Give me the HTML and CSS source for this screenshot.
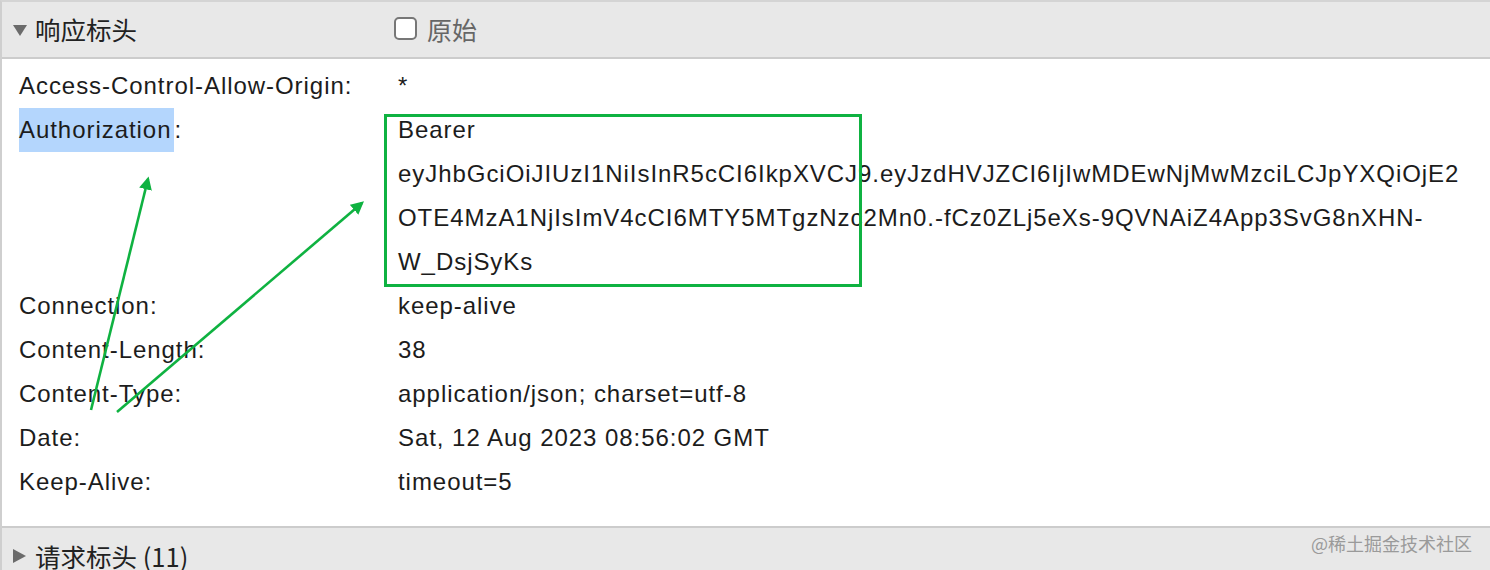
FILE: index.html
```html
<!DOCTYPE html>
<html lang="zh">
<head>
<meta charset="utf-8">
<title>响应标头</title>
<link rel="stylesheet" href="styles.css">
</head>
<body>
<div class="panel">
  <div class="section-head">
    <div class="title"><span class="tri down"></span>响应标头</div>
    <label class="raw"><span class="box"></span>原始</label>
  </div>
  <div class="headers">
    <div class="name">Access-Control-Allow-Origin:</div>
    <div class="value">*</div>
    <div class="name"><span class="sel">Authorization</span>:</div>
    <div class="value">
      <div>Bearer</div>
      <div>eyJhbGciOiJIUzI1NiIsInR5cCI6IkpXVCJ9.eyJzdHVJZCI6IjIwMDEwNjMwMzciLCJpYXQiOjE2</div>
      <div>OTE4MzA1NjIsImV4cCI6MTY5MTgzNzc2Mn0.-fCz0ZLj5eXs-9QVNAiZ4App3SvG8nXHN-</div>
      <div>W_DsjSyKs</div>
    </div>
    <div class="name">Connection:</div>
    <div class="value">keep-alive</div>
    <div class="name">Content-Length:</div>
    <div class="value">38</div>
    <div class="name">Content-Type:</div>
    <div class="value">application/json; charset=utf-8</div>
    <div class="name">Date:</div>
    <div class="value">Sat, 12 Aug 2023 08:56:02 GMT</div>
    <div class="name">Keep-Alive:</div>
    <div class="value">timeout=5</div>
  </div>
  <div class="section-foot">
    <div class="title"><span class="tri right"></span>请求标头 (11)</div>
    <div class="mark">@稀土掘金技术社区</div>
  </div>
</div>
<div class="callout"></div>
<svg class="arrows" width="1490" height="570" viewBox="0 0 1490 570">
  <defs>
    <marker id="ah" viewBox="0 0 10 10" refX="8" refY="5" markerWidth="5" markerHeight="5" orient="auto">
      <path d="M0 0 L10 5 L0 10 Z" fill="#0fb241"/>
    </marker>
  </defs>
  <line x1="91" y1="410" x2="148" y2="179" stroke="#0fb241" stroke-width="2.6" marker-end="url(#ah)"/>
  <line x1="117" y1="412" x2="362" y2="203" stroke="#0fb241" stroke-width="2.6" marker-end="url(#ah)"/>
</svg>
</body>
</html>
```
FILE: styles.css
```css
html, body {
  margin: 0;
  padding: 0;
  background: #ffffff;
}
body {
  width: 1490px;
  height: 570px;
  overflow: hidden;
  position: relative;
  font-family: "Liberation Sans", Arial, "Noto Sans CJK SC", sans-serif;
  color: #1c1c1c;
}
.panel {
  border-left: 2px solid #cfcfcf;
  border-top: 2px solid #d4d4d4;
  height: 568px;
  display: flex;
  flex-direction: column;
}
.section-head {
  height: 53px;
  padding-bottom: 2px;
  background: #e8e8e8;
  border-bottom: 2px solid #cccccc;
  display: flex;
  align-items: center;
}
.title {
  font-family: "Noto Sans CJK SC", "Liberation Sans", sans-serif;
  font-size: 25.5px;
  color: #222222;
  display: flex;
  align-items: center;
  padding-left: 11px;
}
.section-head .title {
  width: 381px;
}
.tri {
  width: 0;
  height: 0;
  margin-right: 8px;
}
.tri.down {
  border-left: 7px solid transparent;
  border-right: 7px solid transparent;
  border-top: 11px solid #6b6b6b;
  margin-top: 3px;
}
.tri.right {
  border-top: 7px solid transparent;
  border-bottom: 7px solid transparent;
  border-left: 13px solid #6b6b6b;
  margin-right: 9px;
  margin-top: 2px;
}
.raw {
  display: flex;
  align-items: center;
  font-family: "Noto Sans CJK SC", sans-serif;
  font-size: 25px;
  color: #666666;
}
.box {
  width: 19px;
  height: 19px;
  border: 2px solid #777777;
  border-radius: 5px;
  background: #ffffff;
  margin-right: 10px;
}
.headers {
  flex: 1;
  display: grid;
  grid-template-columns: 379px 1fr;
  align-content: start;
  padding: 5px 0 0 17px;
  font-size: 24px;
  letter-spacing: 0.95px;
  line-height: 44px;
}
.name, .value {
  white-space: nowrap;
}
.sel {
  background: #b4d6fd;
  display: inline-block;
  padding-right: 3px;
}
.section-foot {
  height: 42px;
  background: #e8e8e8;
  border-top: 2px solid #cccccc;
  display: flex;
  align-items: center;
}
.section-foot .title {
  padding-top: 12px;
}
.mark {
  margin-left: auto;
  margin-right: 18px;
  align-self: flex-start;
  padding-top: 2px;
  font-family: "Noto Sans CJK SC", sans-serif;
  font-size: 18px;
  color: #9a9a9a;
}
.callout {
  position: absolute;
  left: 384px;
  top: 114px;
  width: 472px;
  height: 167px;
  border: 3px solid #0fb241;
}
.arrows {
  position: absolute;
  left: 0;
  top: 0;
  pointer-events: none;
}
```
